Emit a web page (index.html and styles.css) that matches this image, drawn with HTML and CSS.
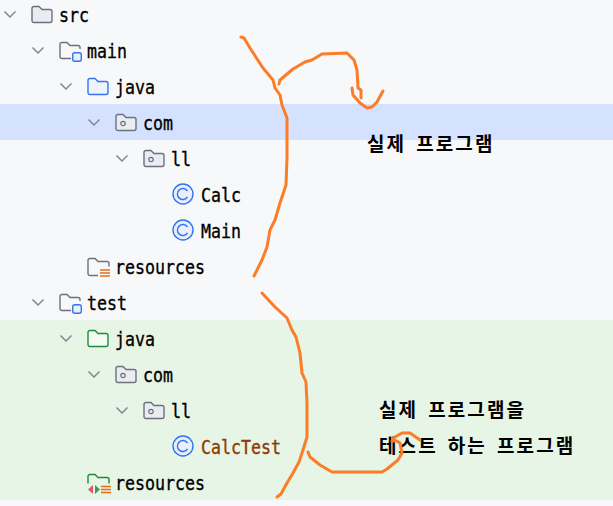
FILE: index.html
```html
<!DOCTYPE html>
<html lang="ko">
<head>
<meta charset="utf-8">
<title>Project tree</title>
<link rel="stylesheet" href="styles.css">
</head>
<body>
<svg class="defs" width="0" height="0" aria-hidden="true">
  <defs>
    <symbol id="chev" viewBox="0 0 20 20"><path d="M4.500 7.500l5.500 5.500 5.500-5.500"/></symbol>
    <path id="f" d="M1 5.500a2 2 0 0 1 2-2h5l3 3h8a2 2 0 0 1 2 2v9a2 2 0 0 1-2 2H3a2 2 0 0 1-2-2z"/>
  </defs>
</svg>
<main class="tree">
  <div class="row"><span class="ind0"></span><svg class="chev"><use href="#chev"/></svg><svg class="ico gray"><use href="#f"/></svg><span class="name">src</span></div>
  <div class="row"><span class="ind1"></span><svg class="chev"><use href="#chev"/></svg><svg class="ico"><path class="open-gray" d="M12 19.500H3a2 2 0 0 1-2-2v-12a2 2 0 0 1 2-2h5l3 3h8a2 2 0 0 1 2 2v1.500"/><rect class="mod" x="13.700" y="13.700" width="8.600" height="8.600" rx="2"/></svg><span class="name">main</span></div>
  <div class="row"><span class="ind2"></span><svg class="chev"><use href="#chev"/></svg><svg class="ico blue"><use href="#f"/></svg><span class="name">java</span></div>
  <div class="row selected"><span class="ind3"></span><svg class="chev"><use href="#chev"/></svg><svg class="ico gray"><use href="#f"/><circle class="dot" cx="8" cy="12.500" r="2.200"/></svg><span class="name">com</span></div>
  <div class="row"><span class="ind4"></span><svg class="chev"><use href="#chev"/></svg><svg class="ico gray"><use href="#f"/><circle class="dot" cx="8" cy="12.500" r="2.200"/></svg><span class="name">ll</span></div>
  <div class="row"><span class="ind5"></span><span class="nochev"></span><svg class="ico cls"><circle cx="11" cy="11" r="10"/><path d="M15.500 8a5.500 5.500 0 1 0 0 6"/></svg><span class="name cname">Calc</span></div>
  <div class="row"><span class="ind5"></span><span class="nochev"></span><svg class="ico cls"><circle cx="11" cy="11" r="10"/><path d="M15.500 8a5.500 5.500 0 1 0 0 6"/></svg><span class="name cname">Main</span></div>
  <div class="row"><span class="ind2"></span><span class="nochev"></span><svg class="ico"><path class="open-gray" d="M11 20.500H3a2 2 0 0 1-2-2v-13a2 2 0 0 1 2-2h5l3 3h9a2 2 0 0 1 2 2v3"/><path class="lines" d="M13 15h10M13 18h10M13 21h10"/></svg><span class="name">resources</span></div>
  <div class="row"><span class="ind1"></span><svg class="chev"><use href="#chev"/></svg><svg class="ico"><path class="open-gray" d="M12 19.500H3a2 2 0 0 1-2-2v-12a2 2 0 0 1 2-2h5l3 3h8a2 2 0 0 1 2 2v1.500"/><rect class="mod" x="13.700" y="13.700" width="8.600" height="8.600" rx="2"/></svg><span class="name">test</span></div>
  <div class="row tst"><span class="ind2"></span><svg class="chev"><use href="#chev"/></svg><svg class="ico green"><use href="#f"/></svg><span class="name">java</span></div>
  <div class="row tst"><span class="ind3"></span><svg class="chev"><use href="#chev"/></svg><svg class="ico gray"><use href="#f"/><circle class="dot" cx="8" cy="12.500" r="2.200"/></svg><span class="name">com</span></div>
  <div class="row tst"><span class="ind4"></span><svg class="chev"><use href="#chev"/></svg><svg class="ico gray"><use href="#f"/><circle class="dot" cx="8" cy="12.500" r="2.200"/></svg><span class="name">ll</span></div>
  <div class="row tst"><span class="ind5"></span><span class="nochev"></span><svg class="ico cls"><circle cx="11" cy="11" r="10"/><path d="M15.500 8a5.500 5.500 0 1 0 0 6"/></svg><span class="name cname changed">CalcTest</span></div>
  <div class="row tst"><span class="ind2"></span><span class="nochev"></span><svg class="ico"><path class="open-green" d="M1 12.500V5.500a2 2 0 0 1 2-2h5l3 3h9a2 2 0 0 1 2 2v4"/><path class="tri-r" d="M6 14v9l-5-4.500z"/><path class="tri-g" d="M8 14v9l5-4.500z"/><path class="lines" d="M14 15.500h10M14 18.500h10M14 21.500h10"/></svg><span class="name">resources</span></div>
</main>
<p class="note note-a">실제 프로그램</p>
<p class="note note-b">실제 프로그램을<br>테스트 하는 프로그램</p>
<svg class="ink" width="613" height="506" viewBox="0 0 613 506" aria-hidden="true">
  <path d="M241 37L244 38L250 48L263 68L273 80L275 88L280 95L282 105L287 118L287 130L287 158L286 185L280 203L275 220L270 230L267 247L262 260L254 276"/>
  <path d="M279 84L280 80L293 69L305 62L312 60L322 54L347 53L354 60L357 70L358 88L361 90L361 98"/>
  <path d="M352 88L353 95L360 103L367 108L372 107L377 102L383 91"/>
  <path d="M262 293L275 307L287 318L292 330L296 337L300 353L302 373L306 382L307 403L307 437L303 450L299 462L293 473L287 483L281 494L277 497"/>
  <path d="M308 452L310 457L320 465L332 472L382 472L387 469L398 460L402 453L400 443L397 441L392 441L395 437L402 433L410 433L420 440"/>
</svg>
</body>
</html>
```

FILE: styles.css
```css
html, body {
  margin: 0;
  height: 506px;
  overflow: hidden;
  background: #f7f8fa;
}
body {
  position: relative;
}
.defs {
  position: absolute;
}
.tree {
  margin-top: -4px;
  font-family: "DejaVu Sans Mono", "Liberation Mono", monospace;
  font-size: 19.5px;
  color: #000;
}
.row {
  display: flex;
  align-items: center;
  height: 36px;
}
.selected { background: #d4e2ff; }
.tst { background: #e6f5e6; }
.ind0 { width: 0; }
.ind1 { width: 28px; }
.ind2 { width: 56px; }
.ind3 { width: 84px; }
.ind4 { width: 112px; }
.ind5 { width: 141px; }
.chev, .nochev {
  flex: none;
  width: 20px;
  height: 20px;
  margin-right: 11px;
}
.chev {
  fill: none;
  stroke: #7c808e;
  stroke-width: 1.4;
}
.ico {
  flex: none;
  width: 22px;
  height: 22px;
  margin-right: 6px;
  overflow: visible;
}
.name {
  display: inline-block;
  line-height: 36px;
  padding-top: 4px;
  white-space: pre;
  transform: scaleX(.852);
  transform-origin: left center;
  -webkit-text-stroke: .35px currentColor;
}
.cname { margin-left: 1px; }
.changed { color: #8c3a08; }
.gray { fill: #ebecf0; stroke: #6c707e; stroke-width: 1.4; }
.blue { fill: #edf3ff; stroke: #3574f0; stroke-width: 1.4; }
.green { fill: #f2fcf3; stroke: #208a3c; stroke-width: 1.4; }
.dot { fill: none; stroke: #6c707e; stroke-width: 1.2; }
.open-gray { fill: none; stroke: #6c707e; stroke-width: 1.4; }
.open-green { fill: none; stroke: #208a3c; stroke-width: 1.4; }
.mod { fill: #e7effd; stroke: #3574f0; stroke-width: 1.4; }
.lines { fill: none; stroke: #e66d17; stroke-width: 1.4; }
.tri-r { fill: #e55765; }
.tri-g { fill: #3b9b63; }
.cls { fill: #e7effd; stroke: #3574f0; stroke-width: 1.4; }
.cls path { fill: none; }
.note {
  position: absolute;
  margin: 0;
  font-family: "DejaVu Sans Mono", "Noto Sans CJK KR", monospace;
  font-size: 19px;
  font-weight: 700;
  line-height: 36px;
  letter-spacing: 2.1px;
  word-spacing: -3.5px;
  white-space: nowrap;
  color: #000;
}
.note-a { left: 367px; top: 126px; }
.note-b { left: 379px; top: 392px; }
.ink {
  position: absolute;
  left: 0;
  top: 0;
  fill: none;
  stroke: #fb7d27;
  stroke-width: 3;
  stroke-linecap: round;
  stroke-linejoin: round;
}
```
